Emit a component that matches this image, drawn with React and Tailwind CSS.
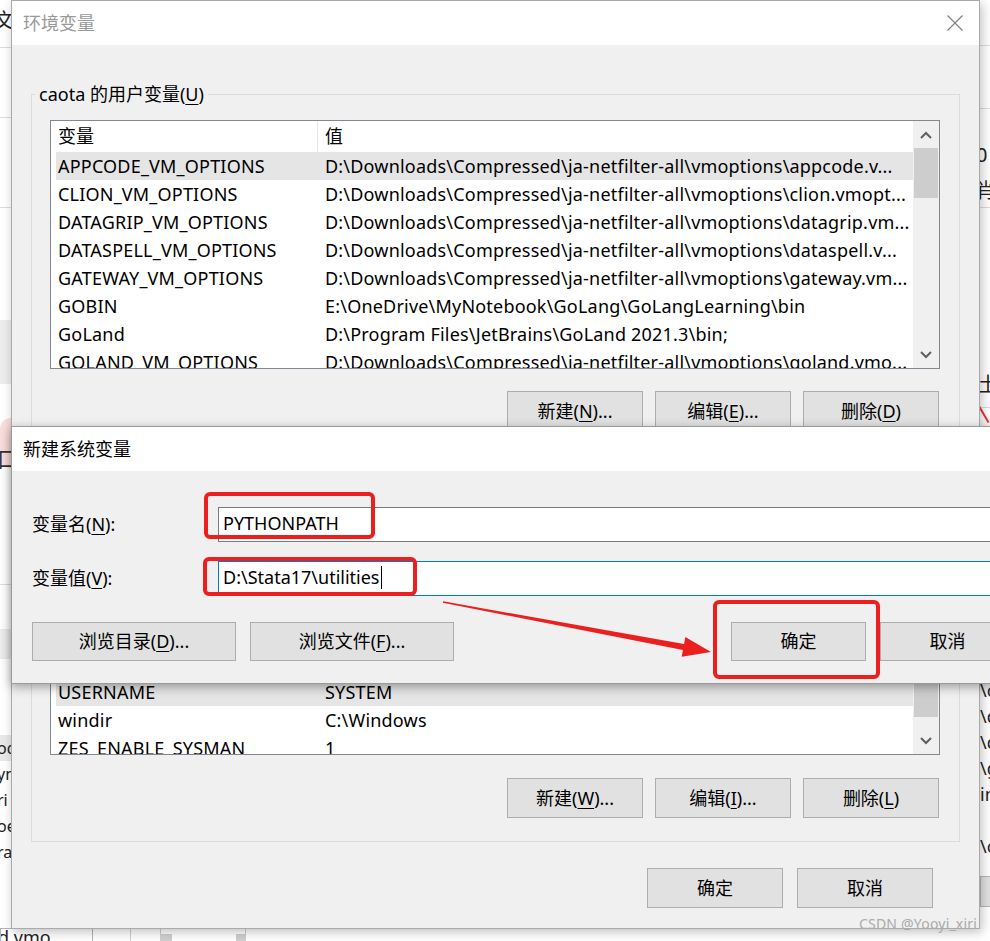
import React from "react";

const font = "font-['Noto_Sans','Noto_Sans_CJK_SC',sans-serif]";

const userVars = [
  ["APPCODE_VM_OPTIONS", "D:\\Downloads\\Compressed\\ja-netfilter-all\\vmoptions\\appcode.v..."],
  ["CLION_VM_OPTIONS", "D:\\Downloads\\Compressed\\ja-netfilter-all\\vmoptions\\clion.vmopt..."],
  ["DATAGRIP_VM_OPTIONS", "D:\\Downloads\\Compressed\\ja-netfilter-all\\vmoptions\\datagrip.vm..."],
  ["DATASPELL_VM_OPTIONS", "D:\\Downloads\\Compressed\\ja-netfilter-all\\vmoptions\\dataspell.v..."],
  ["GATEWAY_VM_OPTIONS", "D:\\Downloads\\Compressed\\ja-netfilter-all\\vmoptions\\gateway.vm..."],
  ["GOBIN", "E:\\OneDrive\\MyNotebook\\GoLang\\GoLangLearning\\bin"],
  ["GoLand", "D:\\Program Files\\JetBrains\\GoLand 2021.3\\bin;"],
  ["GOLAND_VM_OPTIONS", "D:\\Downloads\\Compressed\\ja-netfilter-all\\vmoptions\\goland.vmo..."],
];

const sysVars = [
  ["PROCESSOR_IDENTIFIER", "Intel64 Family 6 Model 140 Stepping 1, GenuineIntel"],
  ["PROCESSOR_LEVEL", "6"],
  ["PROCESSOR_REVISION", "8c01"],
  ["PSModulePath", "%ProgramFiles%\\WindowsPowerShell\\Modules;C:\\WINDOWS\\..."],
  ["TEMP", "C:\\WINDOWS\\TEMP"],
  ["USERNAME", "SYSTEM"],
  ["windir", "C:\\Windows"],
  ["ZES_ENABLE_SYSMAN", "1"],
];

function Chevron({ up }) {
  return (
    <svg width="12" height="8" viewBox="0 0 12 8">
      <path
        d={up ? "M1 7 L6 2 L11 7" : "M1 1 L6 6 L11 1"}
        fill="none"
        stroke="#606060"
        strokeWidth="2"
      />
    </svg>
  );
}

function Acc({ children }) {
  return <u className="underline decoration-1 underline-offset-[3px]">{children}</u>;
}

function Btn({ children, w = "w-[136px]", h = "h-[40px]" }) {
  return (
    <div
      className={`flex ${w} ${h} shrink-0 items-center justify-center border border-[#adadad] bg-[#e1e1e1] text-[18px] text-black`}
    >
      {children}
    </div>
  );
}

function VarList({ rows, selected, spacer, thumb }) {
  return (
    <div className="flex h-[249px] border border-[#828790] bg-white text-[18px] text-black">
      <div className="min-w-0 flex-1 overflow-hidden pl-[5px]">
        <div className="flex h-[31px] items-center">
          <div className="w-[261px] shrink-0 pl-[2px]">变量</div>
          <div className="flex h-full items-center border-l border-[#e5e5e5] pl-[7px]">值</div>
        </div>
        {rows.map(([name, value], i) => (
          <div
            key={name}
            className={`flex h-[28px] items-center whitespace-nowrap tracking-[0.2px] ${i === selected ? "bg-[#e5e5e5]" : ""}`}
          >
            <div className="w-[261px] shrink-0 pl-[2px]">{name}</div>
            <div className="pl-[8px]">{value}</div>
          </div>
        ))}
      </div>
      <div className="flex w-[26px] shrink-0 flex-col bg-[#f0f0f0]">
        <div className="flex h-[27px] items-center justify-center">
          <Chevron up />
        </div>
        <div className={spacer} />
        <div className={`${thumb} mx-px bg-[#cdcdcd]`} />
        <div className="flex-1" />
        <div className="flex h-[27px] items-center justify-center">
          <Chevron />
        </div>
      </div>
    </div>
  );
}

function GroupBox({ label, children, className = "" }) {
  return (
    <div className={`relative border border-[#dcdcdc] pl-[18px] pr-[19px] pt-[25px] pb-[23px] ${className}`}>
      <span className="absolute -top-[14px] left-[3px] bg-[#f0f0f0] px-[4px] text-[18px] text-black">
        {label}
      </span>
      {children}
    </div>
  );
}

function Backdrop() {
  return (
    <div className="absolute inset-0 bg-white text-[16px] text-[#222]">
      {/* left window sliver */}
      <div className="absolute left-[-6px] top-[6px] text-[20px]">文</div>
      <div className="absolute left-0 top-[47px] h-px w-[11px] bg-[#dcdcdc]" />
      <div className="absolute left-0 top-[117px] h-px w-[11px] bg-[#dcdcdc]" />
      <div className="absolute left-0 top-[207px] h-px w-[11px] bg-[#dcdcdc]" />
      <div className="absolute left-0 top-[320px] h-[64px] w-[11px] bg-[#ececec]" />
      <div className="absolute left-0 top-[584px] h-px w-[11px] bg-[#dcdcdc]" />
      <div className="absolute left-0 top-[629px] h-[30px] w-[11px] bg-[#ececec]" />
      <div className="absolute left-[-3px] top-[735px] flex flex-col leading-[26px]">
        <span className="bg-[#e8e8e8]">od</span>
        <span>yn</span>
        <span>ri</span>
        <span>oe</span>
        <span>ra</span>
      </div>
      <div className="absolute left-[-2px] top-[924px] text-[18px]">d vmo</div>
      <div className="absolute left-0 top-[928px] h-[14px] w-[93px] border border-[#b5b5b5]" />
      <div className="absolute left-[130px] top-[929px] h-[12px] w-px bg-[#cfcfcf]" />
      <div className="absolute left-[160px] top-[929px] h-[12px] w-px bg-[#cfcfcf]" />
      <div className="absolute left-[245px] top-[929px] h-[12px] w-px bg-[#cfcfcf]" />
      <div className="absolute left-[160px] top-[934px] h-[8px] w-[12px] bg-[#cfcfcf]" />
      <div className="absolute left-[236px] top-[934px] h-[8px] w-[10px] bg-[#cfcfcf]" />
      {/* right window sliver */}
      <div className="absolute left-[979px] top-[45px] h-px w-[11px] bg-[#dcdcdc]" />
      <div className="absolute left-[979px] top-[108px] h-px w-[11px] bg-[#dcdcdc]" />
      <div className="absolute left-[976px] top-[140px] text-[20px]">0</div>
      <div className="absolute left-[976px] top-[176px] text-[20px]">肖</div>
      <div className="absolute left-[979px] top-[207px] h-px w-[11px] bg-[#dcdcdc]" />
      <div className="absolute left-[978px] top-[370px] text-[20px]">土</div>
      <div className="absolute left-[979px] top-[407px] h-px w-[11px] bg-[#dcdcdc]" />
      <div className="absolute left-[982px] top-[402px] h-[22px] w-[2px] -rotate-[30deg] bg-[#e33]" />
      <div className="absolute left-[980px] top-[677px] flex flex-col text-[18px] leading-[26px]">
        <span>\c</span>
        <span>\d</span>
        <span>\d</span>
        <span>\g</span>
        <span>in</span>
        <span className="mt-[26px]">\c</span>
      </div>
      <div className="absolute left-[980px] top-[876px] h-[31px] w-[20px] border border-[#b5b5b5] bg-[#e1e1e1]" />
    </div>
  );
}

function MainDialog() {
  return (
    <div className="absolute left-[11px] top-0 flex h-[929px] w-[969px] flex-col border border-[#aaaaaa] bg-[#f0f0f0] shadow-[2px_3px_10px_rgba(0,0,0,0.25)]">
      <div className="flex h-[44px] shrink-0 items-center justify-between bg-white pl-[11px] pr-[16px]">
        <span className="text-[18px] text-[#999999]">环境变量</span>
        <svg width="16" height="16" viewBox="0 0 16 16">
          <path d="M0.5 0.5 L15.5 15.5 M15.5 0.5 L0.5 15.5" stroke="#808080" strokeWidth="1.2" />
        </svg>
      </div>
      <div className="flex flex-1 flex-col px-[19px] pt-[49px]">
        <GroupBox
          label={
            <>
              caota 的用户变量(<Acc>U</Acc>)
            </>
          }
        >
          <VarList rows={userVars} selected={0} spacer="h-0" thumb="h-[50px]" />
          <div className="mt-[22px] flex justify-end gap-[12px] pr-px">
            <Btn>
              新建(<Acc>N</Acc>)...
            </Btn>
            <Btn>
              编辑(<Acc>E</Acc>)...
            </Btn>
            <Btn>
              删除(<Acc>D</Acc>)
            </Btn>
          </div>
        </GroupBox>
        <GroupBox
          className="mt-[25px]"
          label={
            <>
              系统变量(<Acc>S</Acc>)
            </>
          }
        >
          <VarList rows={sysVars} selected={5} spacer="h-[150px]" thumb="h-[33px]" />
          <div className="mt-[23px] flex justify-end gap-[12px] pr-px">
            <Btn>
              新建(<Acc>W</Acc>)...
            </Btn>
            <Btn>
              编辑(<Acc>I</Acc>)...
            </Btn>
            <Btn>
              删除(<Acc>L</Acc>)
            </Btn>
          </div>
        </GroupBox>
        <div className="mt-[26px] flex justify-end gap-[14px] pr-[27px]">
          <Btn>确定</Btn>
          <Btn>取消</Btn>
        </div>
      </div>
    </div>
  );
}

function NewVarDialog() {
  return (
    <div className="absolute left-[11px] top-[426px] flex h-[258px] w-[1000px] flex-col border border-[#9a9a9a] bg-[#f0f0f0] text-[18px] text-black shadow-[0_3px_10px_rgba(0,0,0,0.35)]">
      <div className="flex h-[44px] shrink-0 items-center bg-white pl-[11px]">
        <span>新建系统变量</span>
      </div>
      <div className="flex flex-col pl-[20px] pt-[36px]">
        <div className="flex items-center">
          <div className="w-[186px] shrink-0">
            变量名(<Acc>N</Acc>):
          </div>
          <div className="flex h-[35px] flex-1 items-center border border-[#7a7a7a] bg-white pb-[3px] pl-[4px]">
            PYTHONPATH
          </div>
        </div>
        <div className="mt-[19px] flex items-center">
          <div className="w-[186px] shrink-0">
            变量值(<Acc>V</Acc>):
          </div>
          <div className="flex h-[35px] flex-1 items-center border border-[#0078d7] bg-white pb-[3px] pl-[4px]">
            D:\Stata17\utilities
            <span className="ml-px h-[23px] w-px bg-black" />
          </div>
        </div>
        <div className="mt-[26px] flex items-center">
          <Btn w="w-[204px]" h="h-[39px]">
            浏览目录(<Acc>D</Acc>)...
          </Btn>
          <div className="ml-[14px]">
            <Btn w="w-[204px]" h="h-[39px]">
              浏览文件(<Acc>F</Acc>)...
            </Btn>
          </div>
          <div className="ml-[277px]">
            <Btn w="w-[135px]" h="h-[39px]">
              确定
            </Btn>
          </div>
          <div className="ml-[14px]">
            <Btn w="w-[135px]" h="h-[39px]">
              取消
            </Btn>
          </div>
        </div>
      </div>
    </div>
  );
}

function Annotations() {
  return (
    <svg className="pointer-events-none absolute inset-0" width="990" height="941" viewBox="0 0 990 941">
      <g fill="none" stroke="#ec1f1f" strokeWidth="4">
        <rect x="206" y="494" width="167" height="43" rx="4" />
        <rect x="205" y="559" width="210" height="35" rx="4" />
        <rect x="715" y="602" width="163" height="75" rx="4" />
      </g>
      <polygon
        fill="#ec1f1f"
        points="443.1,601.3 684.1,643.9 685.3,637.1 711,652 681.7,656.7 682.9,649.9 442.9,602.7"
      />
    </svg>
  );
}

export default function App() {
  return (
    <div className={`relative h-[941px] w-[990px] overflow-hidden ${font}`}>
      <Backdrop />
      <div className="absolute left-0 top-[418px] h-[50px] w-[80px] rounded-[10px] bg-[rgba(240,120,120,0.25)]" />
      <div className="absolute left-[-3px] top-[442px] text-[22px] text-[#333]">口</div>
      <MainDialog />
      <NewVarDialog />
      <Annotations />
      <div className="absolute left-[859px] top-[913px] text-[14px] tracking-[0.2px] text-[#aaaaaa]">
        CSDN @Yooyi_xiri
      </div>
    </div>
  );
}
